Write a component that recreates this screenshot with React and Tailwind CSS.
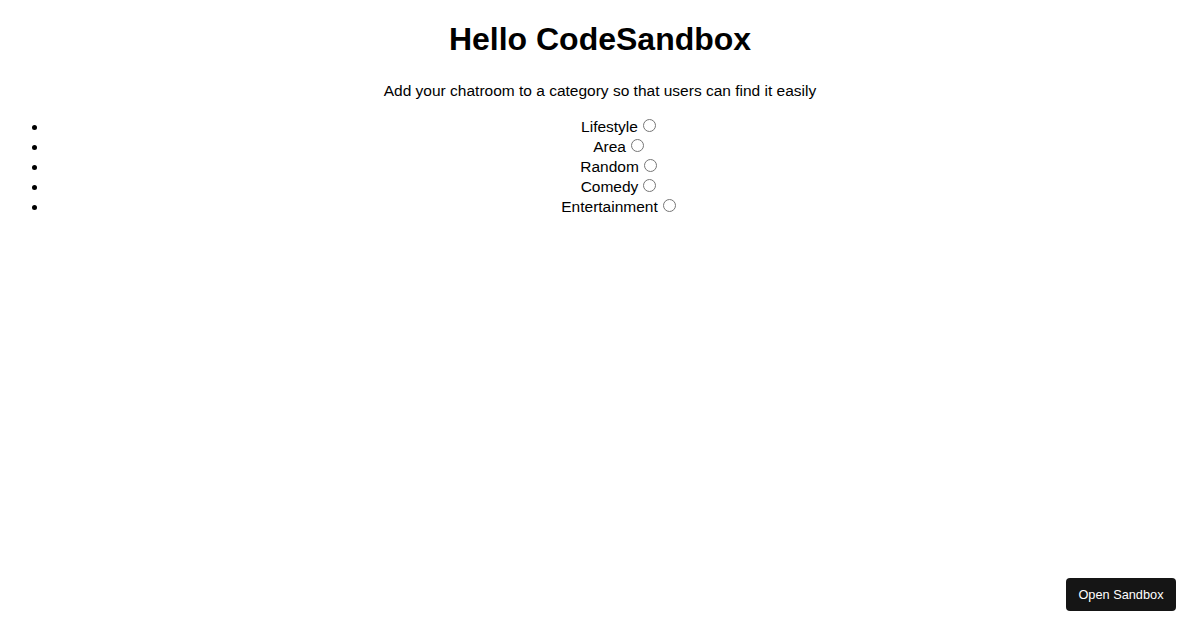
import React from "react";

const cats = ["Lifestyle", "Area", "Random", "Comedy", "Entertainment"];

export default function App() {
  return (
    <div className="mx-2 text-center font-['Liberation_Sans',Arial,sans-serif] text-black">
      <h1 className="pt-[21px] text-[32px] font-bold leading-[37px]">Hello CodeSandbox</h1>
      <p className="mt-[24px] text-[15.5px] leading-[18px]">
        Add your chatroom to a category so that users can find it easily
      </p>
      <ul className="mt-4 list-disc pl-10">
        {cats.map((c) => (
          <li key={c} className="text-[15.5px] leading-[18px]">
            {c}
            <input
              type="radio"
              name="cat"
              className="ml-[5px] mr-[3px] mt-[3px] h-[13px] w-[13px]"
            />
          </li>
        ))}
      </ul>
      <button className="fixed bottom-[19px] right-[24px] h-[33px] w-[110px] rounded-[4px] bg-[#151515] font-['Liberation_Sans',Arial,sans-serif] text-[12.75px] text-white">
        Open Sandbox
      </button>
    </div>
  );
}
